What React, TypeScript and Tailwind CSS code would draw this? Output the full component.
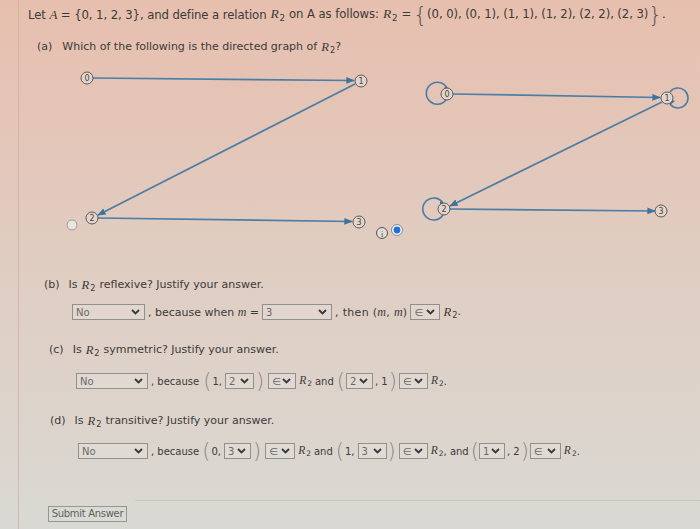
import type { ReactNode } from 'react'

function R2({ sub = '2' }: { sub?: string }) {
  return (
    <span className="inline-flex items-baseline">
      <i className="font-['Liberation_Serif',serif] text-[1.15em]">R</i>
      <sub className="text-[0.75em] ml-[1px]">{sub}</sub>
    </span>
  )
}

function Chevron() {
  return (
    <svg width="9" height="6" viewBox="0 0 9 6" className="shrink-0">
      <polyline points="1,1 4.5,4.5 8,1" fill="none" stroke="#3a3a3a" strokeWidth="1.9" />
    </svg>
  )
}

function Select({ value, className }: { value: string; className: string }) {
  return (
    <span
      className={
        'inline-flex items-center justify-between h-[16px] border border-[#8e918c] bg-[#ece9e4]/30 pl-[3px] pr-[4px] text-[10px] text-[#6a6a6a] ' +
        className
      }
    >
      <span>{value}</span>
      <Chevron />
    </span>
  )
}

function Paren({ children }: { children: ReactNode }) {
  return <span className="text-[21px] leading-none text-[#8a8a8a] font-extralight -mt-[3px]">{children}</span>
}

function Node({ x, y, label }: { x: number; y: number; label: string }) {
  return (
    <g>
      <circle cx={x} cy={y} r="6" fill="#e4d5cc" stroke="#5a5a5a" strokeWidth="1" />
      <text x={x} y={y + 3} textAnchor="middle" fontSize="8" fill="#444" fontFamily="DejaVu Sans, sans-serif">
        {label}
      </text>
    </g>
  )
}

function Edge({ x1, y1, x2, y2 }: { x1: number; y1: number; x2: number; y2: number }) {
  return <line x1={x1} y1={y1} x2={x2} y2={y2} stroke="#4b7ea6" strokeWidth="1.7" markerEnd="url(#arr)" />
}

function Graphs() {
  // drawn in page coordinates, the svg starts at y = 60
  const o = 60
  return (
    <svg width="700" height="185" viewBox={`0 ${o} 700 185`} className="block">
      <defs>
        <marker id="arr" viewBox="0 0 10 10" refX="9" refY="5" markerWidth="5" markerHeight="5" orient="auto">
          <path d="M0,1 L10,5 L0,9 z" fill="#3f729c" />
        </marker>
      </defs>
      {/* left graph */}
      <Edge x1={93} y1={78} x2={354} y2={80.5} />
      <Edge x1={355} y1={84} x2={98} y2={215} />
      <Edge x1={98} y1={218} x2={352} y2={221.5} />
      <Node x={87} y={78} label="0" />
      <Node x={361} y={81} label="1" />
      <Node x={92} y={218} label="2" />
      <Node x={359} y={222} label="3" />
      <circle cx={72} cy={225} r="5" fill="#ece4de" stroke="#9a9a9a" strokeWidth="1" />

      {/* info + selected radio */}
      <circle cx={382} cy={233} r="5.5" fill="#e4dcd6" stroke="#555" strokeWidth="1" />
      <text x={382} y={236.5} textAnchor="middle" fontSize="8" fill="#444" fontFamily="Liberation Serif, serif">
        i
      </text>
      <circle cx={397} cy={230} r="5.5" fill="#f4f4f4" stroke="#8a8a8a" strokeWidth="1" />
      <circle cx={397} cy={230} r="3.4" fill="#1f6fe0" />

      {/* right graph */}
      <path d="M447,88 A11,11 0 1 0 446,100" fill="none" stroke="#4b7ea6" strokeWidth="1.6" />
      <path d="M445,86 L450,90 L444,91 z" fill="#3f729c" />
      <path d="M670,92 A10,10 0 1 1 670,104" fill="none" stroke="#4b7ea6" strokeWidth="1.6" />
      <path d="M675,101 L670,105 L669,99 z" fill="#3f729c" />
      <path d="M443,203 A11,11 0 1 0 443,215" fill="none" stroke="#4b7ea6" strokeWidth="1.6" />
      <path d="M440,201 L446,205 L440,207 z" fill="#3f729c" />
      <Edge x1={453} y1={94} x2={660} y2={97.5} />
      <Edge x1={662} y1={102} x2={450} y2={206} />
      <Edge x1={450} y1={209} x2={655} y2={211} />
      <Node x={447} y={94} label="0" />
      <Node x={667} y={98} label="1" />
      <Node x={444} y={209} label="2" />
      <Node x={661} y={211} label="3" />
    </svg>
  )
}

export default function App() {
  return (
    <div className="relative w-[700px] h-[529px] overflow-hidden bg-linear-to-b from-[#e7bfae] via-[#e0cdc2] to-[#d9d9d3] font-['DejaVu_Sans',sans-serif] text-[10px] text-[#3c3a39]">
      <div className="absolute left-[18px] top-0 bottom-0 w-px bg-[#c9a99c]/60" />
      <div className="absolute left-[135px] right-0 top-[500px] h-px bg-[#c8c8c2]" />

      <div className="pt-[3px] pl-[28px] flex items-center h-[26px] text-[11.7px] tracking-[-0.1px]">
        <span>
          Let <i className="font-['Liberation_Serif',serif] text-[13px]">A</i> = {'{'}0, 1, 2, 3{'}'}, and define a relation
        </span>
        <span className="ml-[4px]">
          <R2 />
        </span>
        <span className="ml-[4px]">on A as follows:</span>
        <span className="ml-[4px]">
          <R2 />
        </span>
        <span className="ml-[4px]">=</span>
        <span className="text-[22px] leading-none font-extralight text-[#555] ml-[2px]">{'{'}</span>
        <span>(0, 0), (0, 1), (1, 1), (1, 2), (2, 2), (2, 3)</span>
        <span className="text-[22px] leading-none font-extralight text-[#555]">{'}'}</span>
        <span>.</span>
      </div>

      <div className="mt-[13px] pl-[37px] flex items-center h-[16px] text-[11px]">
        <span>(a)</span>
        <span className="ml-[10px]">Which of the following is the directed graph of</span>
        <span className="ml-[4px]">
          <R2 />
        </span>
        <span>?</span>
      </div>

      <div className="mt-[5px]">
        <Graphs />
      </div>

      <div className="mt-[32px] pl-[44px] flex items-center h-[16px] text-[11px]">
        <span>(b)</span>
        <span className="ml-[9px]">Is</span>
        <span className="ml-[4px]">
          <R2 />
        </span>
        <span className="ml-[4px]">reflexive? Justify your answer.</span>
      </div>

      <div className="mt-[10px] pl-[72px] flex items-center h-[18px] text-[11px]">
        <Select value="No" className="w-[73px]" />
        <span className="ml-[3px]">
          , because when <i className="font-['Liberation_Serif',serif] text-[12px]">m</i> =
        </span>
        <Select value="3" className="w-[70px] ml-[3px]" />
        <span className="ml-[3px] tracking-[0.3px]">
          , then (<i className="font-['Liberation_Serif',serif] text-[12px]">m</i>,{' '}
          <i className="font-['Liberation_Serif',serif] text-[12px]">m</i>)
        </span>
        <Select value="∈" className="w-[30px] ml-[3px]" />
        <span className="ml-[3px]">
          <R2 />
        </span>
        <span>.</span>
      </div>

      <div className="mt-[21px] pl-[49px] flex items-center h-[16px] text-[11px]">
        <span>(c)</span>
        <span className="ml-[9px]">Is</span>
        <span className="ml-[4px]">
          <R2 />
        </span>
        <span className="ml-[4px]">symmetric? Justify your answer.</span>
      </div>

      <div className="mt-[13px] pl-[76px] flex items-center h-[20px]">
        <Select value="No" className="w-[72px]" />
        <span className="ml-[3px]">, because</span>
        <span className="ml-[4px]">
          <Paren>(</Paren>
        </span>
        <span className="ml-[1px]">1,</span>
        <Select value="2" className="w-[29px] ml-[3px]" />
        <span className="ml-[2px]">
          <Paren>)</Paren>
        </span>
        <Select value="∈" className="w-[28px] ml-[4px]" />
        <span className="ml-[3px]">
          <R2 />
        </span>
        <span className="ml-[3px]">and</span>
        <span className="ml-[3px]">
          <Paren>(</Paren>
        </span>
        <Select value="2" className="w-[27px] ml-[1px]" />
        <span className="ml-[2px]">, 1</span>
        <span className="ml-[1px]">
          <Paren>)</Paren>
        </span>
        <Select value="∈" className="w-[29px] ml-[2px]" />
        <span className="ml-[3px]">
          <R2 />
        </span>
        <span>.</span>
      </div>

      <div className="mt-[22px] pl-[50px] flex items-center h-[16px] text-[11px]">
        <span>(d)</span>
        <span className="ml-[9px]">Is</span>
        <span className="ml-[4px]">
          <R2 />
        </span>
        <span className="ml-[4px]">transitive? Justify your answer.</span>
      </div>

      <div className="mt-[12px] pl-[78px] flex items-center h-[20px]">
        <Select value="No" className="w-[70px]" />
        <span className="ml-[3px]">, because</span>
        <span className="ml-[3px]">
          <Paren>(</Paren>
        </span>
        <span className="ml-[1px]">0,</span>
        <Select value="3" className="w-[27px] ml-[3px]" />
        <span className="ml-[2px]">
          <Paren>)</Paren>
        </span>
        <Select value="∈" className="w-[30px] ml-[4px]" />
        <span className="ml-[3px]">
          <R2 />
        </span>
        <span className="ml-[3px]">and</span>
        <span className="ml-[3px]">
          <Paren>(</Paren>
        </span>
        <span className="ml-[1px]">1,</span>
        <Select value="3" className="w-[29px] ml-[3px]" />
        <span className="ml-[1px]">
          <Paren>)</Paren>
        </span>
        <Select value="∈" className="w-[29px] ml-[3px]" />
        <span className="ml-[3px]">
          <R2 />
        </span>
        <span>, and</span>
        <span className="ml-[2px]">
          <Paren>(</Paren>
        </span>
        <Select value="1" className="w-[26px]" />
        <span className="ml-[2px]">, 2</span>
        <span className="ml-[1px]">
          <Paren>)</Paren>
        </span>
        <Select value="∈" className="w-[31px] ml-[1px]" />
        <span className="ml-[3px]">
          <R2 />
        </span>
        <span>.</span>
      </div>

      <div className="mt-[45px] pl-[48px]">
        <button className="h-[16px] w-[79px] border border-[#8f9a93] bg-[#dadad4] text-[10px] text-[#5f5f5f] leading-none tracking-[-0.3px]">
          Submit Answer
        </button>
      </div>
    </div>
  )
}
